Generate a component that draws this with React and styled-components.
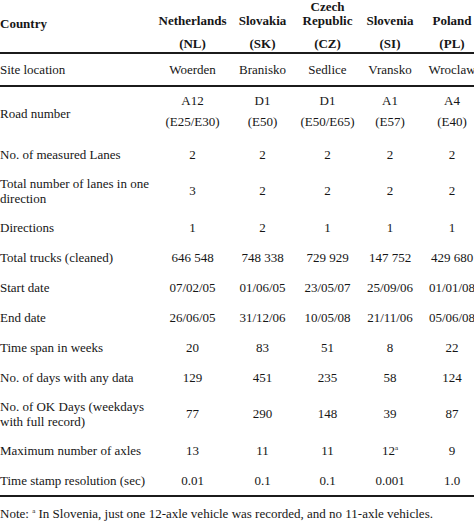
import React from "react";
import styled, { createGlobalStyle } from "styled-components";

const Global = createGlobalStyle`
  html, body { margin: 0; padding: 0; background: #fff; overflow: hidden; }
  body { font-family: "Liberation Serif", "Times New Roman", serif; color: #161616; }
`;

const COLS = "155px 75px 65px 65px 60px 64px";

const Page = styled.div`
  width: 474px;
  height: 524px;
  overflow: hidden;
`;

const Table = styled.div`
  width: 484px;
  font-size: 13px;
`;

const Row = styled.div`
  display: grid;
  grid-template-columns: ${COLS};
  height: ${(p) => p.$h}px;
  align-items: center;
`;

const HeaderRow = styled(Row)`
  align-items: stretch;
  font-weight: bold;
`;

const HeadLabel = styled.div`
  align-self: center;
  padding-bottom: 6px;
  line-height: 14px;
`;

const HeadCell = styled.div`
  display: flex;
  flex-direction: column;
  justify-content: flex-end;
  align-items: center;
  text-align: center;
  padding-bottom: 3px;
  line-height: 14px;
`;

const HeadName = styled.div`
  margin-bottom: 9px;
`;

const Label = styled.div`
  line-height: ${(p) => p.$lh || 15}px;
  white-space: ${(p) => (p.$wrap ? "normal" : "nowrap")};
  padding-right: 4px;
`;

const Value = styled.div`
  text-align: center;
  white-space: nowrap;
  line-height: ${(p) => p.$lh || 15}px;
  padding-bottom: ${(p) => p.$pb || 0}px;
`;

const Rule = styled.div`
  height: 2px;
  background: #1b1b1b;
`;

const Sup = styled.sup`
  font-size: 7px;
  line-height: 0;
  vertical-align: 5px;
`;

const Note = styled.div`
  font-size: 13px;
  line-height: 15px;
  padding-top: 9px;
  white-space: nowrap;
`;

const countries = [
  { name: "Netherlands", code: "(NL)" },
  { name: "Slovakia", code: "(SK)" },
  { name: ["Czech", "Republic"], code: "(CZ)" },
  { name: "Slovenia", code: "(SI)" },
  { name: "Poland", code: "(PL)" },
];

const rows = [
  { label: "No. of measured Lanes", h: 30, values: ["2", "2", "2", "2", "2"] },
  { label: "Total number of lanes in one direction", h: 43, wrap: true, values: ["3", "2", "2", "2", "2"] },
  { label: "Directions", h: 30, values: ["1", "2", "1", "1", "1"] },
  { label: "Total trucks (cleaned)", h: 30, values: ["646 548", "748 338", "729 929", "147 752", "429 680"] },
  { label: "Start date", h: 30, values: ["07/02/05", "01/06/05", "23/05/07", "25/09/06", "01/01/08"] },
  { label: "End date", h: 30, values: ["26/06/05", "31/12/06", "10/05/08", "21/11/06", "05/06/08"] },
  { label: "Time span in weeks", h: 30, values: ["20", "83", "51", "8", "22"] },
  { label: "No. of days with any data", h: 30, values: ["129", "451", "235", "58", "124"] },
  { label: "No. of OK Days (weekdays with full record)", h: 43, wrap: true, values: ["77", "290", "148", "39", "87"] },
  { label: "Maximum number of axles", h: 30, values: ["13", "11", "11", <>12<Sup>a</Sup></>, "9"] },
  { label: "Time stamp resolution (sec)", h: 30, values: ["0.01", "0.1", "0.1", "0.001", "1.0"] },
];

const roads = [
  ["A12", "(E25/E30)"],
  ["D1", "(E50)"],
  ["D1", "(E50/E65)"],
  ["A1", "(E57)"],
  ["A4", "(E40)"],
];

export default function App() {
  return (
    <Page>
      <Global />
      <Table>
        <HeaderRow $h={52}>
          <HeadLabel>Country</HeadLabel>
          {countries.map((c) => (
            <HeadCell key={c.code}>
              <HeadName>
                {Array.isArray(c.name) ? (
                  <>
                    {c.name[0]}
                    <br />
                    {c.name[1]}
                  </>
                ) : (
                  c.name
                )}
              </HeadName>
              <div>{c.code}</div>
            </HeadCell>
          ))}
        </HeaderRow>
        <Rule />
        <Row $h={31}>
          <Label>Site location</Label>
          {["Woerden", "Branisko", "Sedlice", "Vransko", "Wroclaw"].map((s) => (
            <Value key={s}>{s}</Value>
          ))}
        </Row>
        <Rule />
        <Row $h={52}>
          <Label>Road number</Label>
          {roads.map((r, i) => (
            <Value key={i} $lh={21} $pb={5}>
              {r[0]}
              <br />
              {r[1]}
            </Value>
          ))}
        </Row>
        {rows.map((r) => (
          <Row key={r.label} $h={r.h}>
            <Label $wrap={r.wrap}>{r.label}</Label>
            {r.values.map((v, i) => (
              <Value key={i}>{v}</Value>
            ))}
          </Row>
        ))}
        <Rule />
      </Table>
      <Note>
        Note: <Sup>a</Sup> In Slovenia, just one 12-axle vehicle was recorded, and no 11-axle vehicles.
      </Note>
    </Page>
  );
}
